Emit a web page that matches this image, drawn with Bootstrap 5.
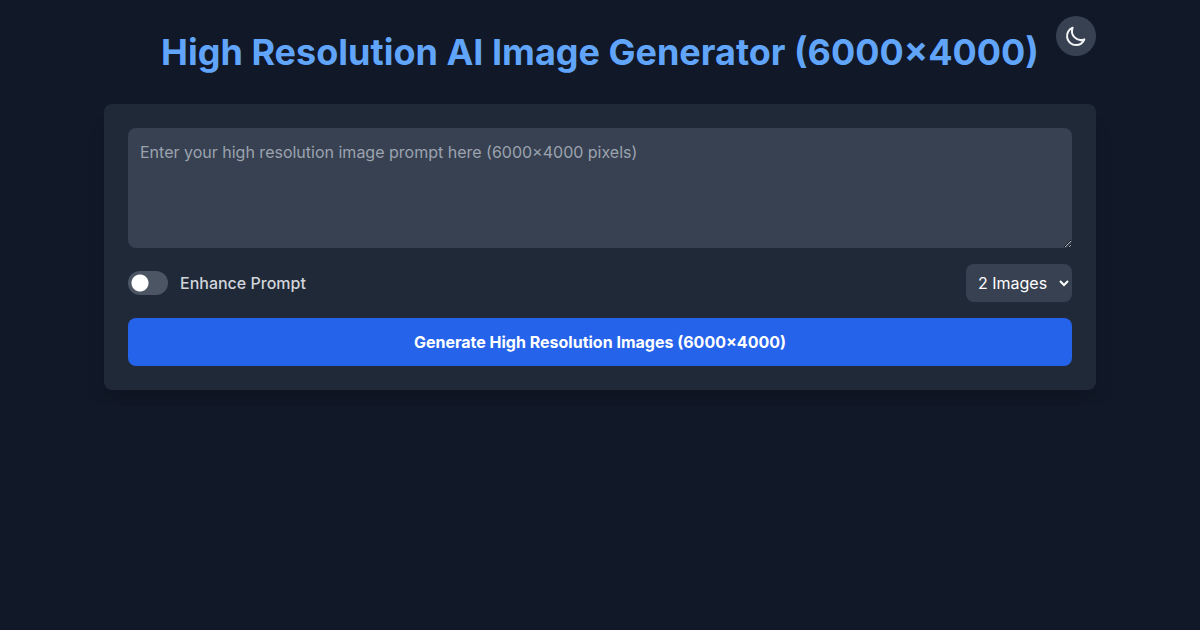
<!DOCTYPE html>
<html lang="en" data-bs-theme="dark">
<head>
<meta charset="utf-8">
<meta name="viewport" content="width=device-width, initial-scale=1">
<title>High Resolution AI Image Generator</title>
<link href="https://cdn.jsdelivr.net/npm/bootstrap@5.3.0/dist/css/bootstrap.min.css" rel="stylesheet">
<style>
body { background: #111827; color: #f3f4f6; font-family: Inter, sans-serif; }
.page { max-width: 1024px; }
.page-title { color: #60a5fa; font-size: 36px; line-height: 40px; }
.theme-toggle { width: 40px; height: 40px; background: #374151; color: #f3f4f6; }
.theme-toggle:hover { background: #4b5563; color: #fff; }
.panel { background: #1f2937; border-radius: 8px; box-shadow: 0 20px 25px -5px rgba(0,0,0,.1), 0 8px 10px -6px rgba(0,0,0,.1); }
.prompt-box { height: 120px; padding: 12px; background: #374151; color: #f3f4f6; border: 0; border-radius: 8px; resize: vertical; }
.prompt-box:focus { background: #374151; color: #fff; }
.prompt-box::placeholder { color: #9ca3af; }
.form-check-input.switch-input { width: 40px; height: 24px; margin: 0; border: 0; border-radius: 12px; background: radial-gradient(circle at 12px 12px, #fff 8px, transparent 9px) #4b5563; }
.form-check-input.switch-input:checked { background: radial-gradient(circle at 28px 12px, #fff 8px, transparent 9px) #2563eb; }
.switch-label { color: #d1d5db; }
.count-select { width: 106px; height: 38px; padding: 0 8px; background: #374151; color: #fff; border: 0; border-radius: 8px; }
.generate { height: 48px; background: #2563eb; color: #fff; border-radius: 8px; }
.generate:hover { background: #1d4ed8; color: #fff; }
</style>
</head>
<body>
<main class="page container-fluid position-relative px-3 py-3">
  <button type="button" class="theme-toggle btn rounded-circle border-0 p-0 d-flex align-items-center justify-content-center position-absolute top-0 end-0 mt-3 me-3" aria-label="Toggle dark mode">
    <svg width="24" height="24" viewBox="0 0 24 24" fill="none" stroke="currentColor" stroke-width="2" stroke-linecap="round" stroke-linejoin="round" aria-hidden="true"><path d="M20.354 15.354A9 9 0 018.646 3.646 9.003 9.003 0 0012 21a9.003 9.003 0 008.354-5.646z"/></svg>
  </button>
  <h1 class="page-title fw-bold text-center mt-3 mb-4 pb-2">High Resolution AI Image Generator (6000×4000)</h1>
  <form class="panel p-4 d-flex flex-column gap-3">
    <textarea class="prompt-box form-control" aria-label="Image prompt" placeholder="Enter your high resolution image prompt here (6000×4000 pixels)"></textarea>
    <div class="d-flex align-items-center justify-content-between">
      <div class="d-flex align-items-center">
        <input class="switch-input form-check-input" type="checkbox" id="enhance">
        <label class="switch-label fw-medium ps-2 ms-1" for="enhance">Enhance Prompt</label>
      </div>
      <select class="count-select" aria-label="Number of images">
        <option>1 Image</option><option selected>2 Images</option><option>3 Images</option><option>4 Images</option>
      </select>
    </div>
    <button type="button" class="generate btn fw-bold border-0">Generate High Resolution Images (6000×4000)</button>
  </form>
</main>
<script src="https://cdn.jsdelivr.net/npm/bootstrap@5.3.0/dist/js/bootstrap.bundle.min.js"></script>
</body>
</html>
